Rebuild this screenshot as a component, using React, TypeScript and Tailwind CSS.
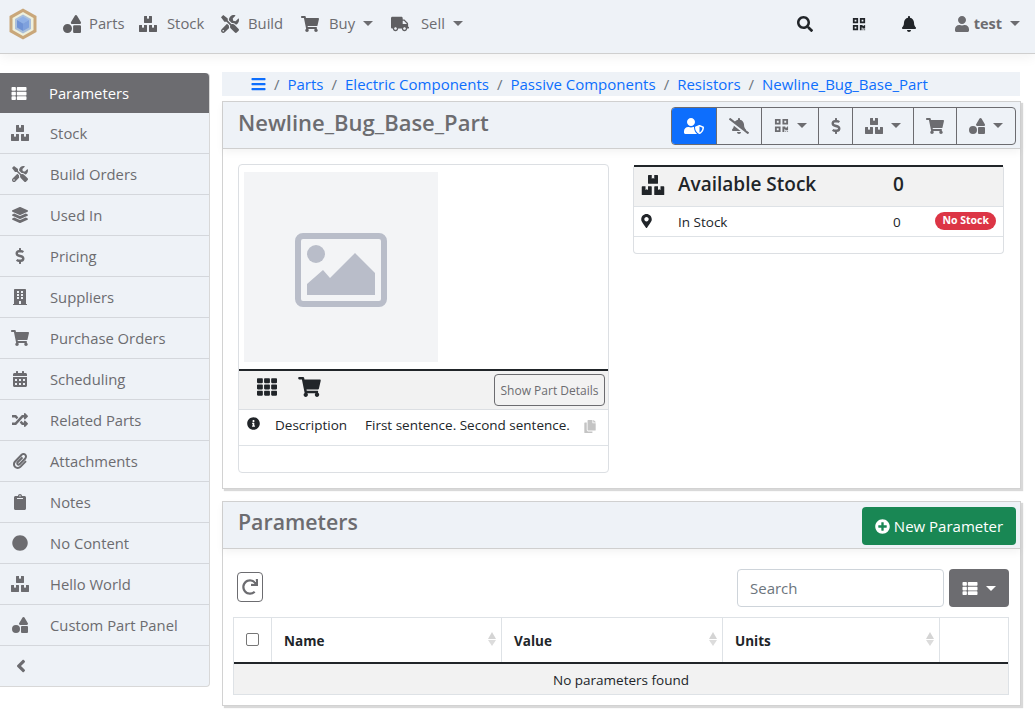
import type { ReactNode } from "react"
import type { IconType } from "react-icons"
import {
  FaAngleLeft,
  FaBars,
  FaBell,
  FaBellSlash,
  FaBoxes,
  FaBuilding,
  FaCalendarAlt,
  FaCircle,
  FaClipboard,
  FaCopy,
  FaDollarSign,
  FaInfoCircle,
  FaLayerGroup,
  FaMapMarkerAlt,
  FaPaperclip,
  FaPlusCircle,
  FaQrcode,
  FaRandom,
  FaRedo,
  FaSearch,
  FaShapes,
  FaShoppingCart,
  FaTh,
  FaThList,
  FaTools,
  FaTruck,
  FaUser,
  FaUserShield,
} from "react-icons/fa"

const sidebarItems: { label: string; icon: IconType }[] = [
  { label: "Stock", icon: FaBoxes },
  { label: "Build Orders", icon: FaTools },
  { label: "Used In", icon: FaLayerGroup },
  { label: "Pricing", icon: FaDollarSign },
  { label: "Suppliers", icon: FaBuilding },
  { label: "Purchase Orders", icon: FaShoppingCart },
  { label: "Scheduling", icon: FaCalendarAlt },
  { label: "Related Parts", icon: FaRandom },
  { label: "Attachments", icon: FaPaperclip },
  { label: "Notes", icon: FaClipboard },
  { label: "No Content", icon: FaCircle },
  { label: "Hello World", icon: FaBoxes },
  { label: "Custom Part Panel", icon: FaShapes },
]

const crumbs = ["Parts", "Electric Components", "Passive Components", "Resistors", "Newline_Bug_Base_Part"]

function Caret({ className = "" }: { className?: string }) {
  return <span className={`h-0 w-0 border-x-[5px] border-t-[5px] border-x-transparent border-t-current ${className}`} />
}

function Logo() {
  return (
    <svg viewBox="0 0 28 32" className="h-[32px] w-[28px]">
      <polygon points="14,0.5 27.5,8 27.5,24 14,31.5 0.5,24 0.5,8" fill="#c9a77a" />
      <polygon points="14,4 24.5,10 24.5,22 14,28 3.5,22 3.5,10" fill="#eef0dd" />
      <polygon points="14,6.5 22,11 22,21 14,25.5 6,21 6,11" fill="#a9bfdc" />
      <polygon points="14,8.5 20,12 14,15.5 8,12" fill="#8fb0e6" />
      <polygon points="8,12 14,15.5 14,23 8,19.5" fill="#6f93d6" />
      <polygon points="20,12 14,15.5 14,23 20,19.5" fill="#7fa1dd" />
    </svg>
  )
}

function NavLink({ icon: Icon, label, caret, className = "", gap = "ml-[9px]" }: { icon: IconType; label: string; caret?: boolean; className?: string; gap?: string }) {
  return (
    <div className={`flex items-center ${className}`}>
      <Icon className="h-[18px] w-[18px] text-[#5f5f62]" />
      <span className={gap}>{label}</span>
      {caret && <Caret className="ml-[8px]" />}
    </div>
  )
}

function ToolButton({ children, caret, className }: { children: ReactNode; caret?: boolean; className: string }) {
  return (
    <div className={`flex h-full items-center justify-center gap-[8px] border-l border-[#6c6c70] text-[#6c6c70] first:border-l-0 ${className}`}>
      {children}
      {caret && <Caret />}
    </div>
  )
}

function SortHead({ label, className }: { label: string; className: string }) {
  return (
    <div className={`flex items-center justify-between border-l border-[#dee2e6] pr-[5px] pl-[12px] ${className}`}>
      <span className="pt-[2px] font-bold">{label}</span>
      <span className="flex flex-col gap-[1px] pb-[2px]">
        <span className="h-0 w-0 border-x-[4px] border-b-[7px] border-x-transparent border-b-[#d4d4d4]" />
        <span className="h-0 w-0 border-x-[4px] border-t-[6px] border-x-transparent border-t-[#dcdcdc]" />
      </span>
    </div>
  )
}

export default function App() {
  return (
    <div className="h-[717px] w-[1035px] overflow-hidden bg-white font-['Open_Sans','Noto_Sans',sans-serif] text-[14px] text-[#212529]">
      {/* Navbar */}
      <header className="flex h-[54px] items-center border-b border-[#cfcfcf] bg-[#eef2f7] pr-[15px] pb-[6px] pl-[9px] shadow-[0_3px_12px_rgba(0,0,0,0.06)]">
        <Logo />
        <nav className="ml-[26px] flex items-center text-[14.8px] text-[#6c6c70]">
          <NavLink icon={FaShapes} label="Parts" gap="ml-[8px]" className="w-[76px]" />
          <NavLink icon={FaBoxes} label="Stock" gap="ml-[10px]" className="w-[82px]" />
          <NavLink icon={FaTools} label="Build" className="w-[80px]" />
          <NavLink icon={FaShoppingCart} label="Buy" gap="ml-[10px]" caret className="w-[90px]" />
          <NavLink icon={FaTruck} label="Sell" gap="ml-[12px]" caret />
        </nav>
        <div className="ml-auto flex items-center text-[#212529]">
          <FaSearch className="h-[16px] w-[16px]" />
          <FaQrcode className="ml-[39px] h-[14px] w-[14px]" />
          <FaBell className="ml-[36px] h-[16px] w-[14px]" />
          <div className="ml-[39px] flex items-center text-[14.5px] font-bold text-[#6c6c70]">
            <FaUser className="h-[16px] w-[14px]" />
            <span className="ml-[5px]">test</span>
            <Caret className="ml-[8px]" />
          </div>
        </div>
      </header>

      <div className="mt-[18px] flex items-start">
        {/* Sidebar */}
        <aside className="mt-px w-[210px] shrink-0 rounded-r-[4px] border-r border-b border-[#d8d8d8] bg-[#eef2f7] text-[14.8px] text-[#6c6c70]">
          <div className="flex h-[40px] items-center rounded-tr-[4px] bg-[#6c6c70] pl-[11px] text-white">
            <FaThList className="h-[15px] w-[16px]" />
            <span className="ml-[22px]">Parameters</span>
          </div>
          {sidebarItems.map(({ label, icon: Icon }) => (
            <div key={label} className="flex h-[41px] items-center border-b border-[#d4d7dc] pl-[11px]">
              <span className="flex w-[18px] justify-center">
                <Icon className="h-[16px] w-[18px]" />
              </span>
              <span className="ml-[21px]">{label}</span>
            </div>
          ))}
          <div className="flex h-[40px] items-center pl-[15px]">
            <FaAngleLeft className="h-[20px] w-[12px]" />
          </div>
        </aside>

        <main className="ml-[12px] w-[799px]">
          {/* Breadcrumb */}
          <div className="flex h-[24px] w-[798px] items-center bg-[#eef2f7] pl-[29px] text-[15px] text-[#0d6efd]">
            <FaBars className="h-[16px] w-[15px]" />
            {crumbs.map((crumb) => (
              <span key={crumb} className="flex items-center">
                <span className="mx-[8px] text-[#6c757d]">/</span>
                {crumb}
              </span>
            ))}
          </div>

          {/* Part panel */}
          <section className="mt-[5px] h-[388px] border border-[#d2d2d2] shadow-[2px_2px_1px_rgba(0,0,0,0.15)]">
            <div className="flex h-[47px] items-center justify-between border-b border-[#cfcfcf] bg-[#eef2f7] pr-[4px] pl-[15px] shadow-[0_3px_8px_rgba(0,0,0,0.05)]">
              <h1 className="-mt-[6px] text-[22px] font-semibold text-[#6c6c70]">Newline_Bug_Base_Part</h1>
              <div className="mt-px flex h-[38px] overflow-hidden rounded-[4px] border border-[#6c6c70]">
                <ToolButton className="w-[44px] bg-[#0d6efd] text-white">
                  <FaUserShield className="h-[16px] w-[20px] text-white" />
                </ToolButton>
                <ToolButton className="w-[45px]">
                  <FaBellSlash className="h-[16px] w-[20px]" />
                </ToolButton>
                <ToolButton caret className="w-[57px]">
                  <FaQrcode className="h-[15px] w-[15px]" />
                </ToolButton>
                <ToolButton className="w-[34px]">
                  <FaDollarSign className="h-[16px] w-[10px]" />
                </ToolButton>
                <ToolButton caret className="w-[61px]">
                  <FaBoxes className="h-[16px] w-[18px]" />
                </ToolButton>
                <ToolButton className="w-[43px]">
                  <FaShoppingCart className="h-[16px] w-[18px]" />
                </ToolButton>
                <ToolButton caret className="w-[59px]">
                  <FaShapes className="h-[16px] w-[16px]" />
                </ToolButton>
              </div>
            </div>

            <div className="flex items-start pt-[15px] pl-[15px]">
              {/* Part image and details */}
              <div className="w-[371px] rounded-[4px] border border-[#dcdfe3]">
                <div className="h-[204px] px-[5px] pt-[7px]">
                  <div className="flex h-[190px] w-[194px] items-center justify-center bg-[#f3f4f6]">
                    <svg viewBox="0 0 92 74" className="mt-[6px] h-[74px] w-[92px]">
                      <rect x="3" y="3" width="86" height="68" rx="5" fill="none" stroke="#b9bdc9" strokeWidth="6" />
                      <circle cx="21" cy="21" r="9" fill="#b9bdc9" />
                      <path d="M12 62V51l16-14 7 8 25-25 20 20v22z" fill="#b9bdc9" />
                    </svg>
                  </div>
                </div>
                <div className="flex h-[41px] items-center justify-between border-t-2 border-b border-t-[#212529] border-b-[#dcdfe3] bg-[#f2f2f2] pr-[3px] pl-[18px]">
                  <div className="-mt-[6px] flex items-center text-[#212529]">
                    <FaTh className="h-[20px] w-[20px]" />
                    <FaShoppingCart className="ml-[21px] h-[20px] w-[23px]" />
                  </div>
                  <div className="flex h-[32px] w-[111px] items-center justify-center rounded-[4px] border border-[#6c6c70] pt-px text-[12px] text-[#6c6c70]">
                    Show Part Details
                  </div>
                </div>
                <div className="flex h-[36px] border-b border-[#dee2e6] pt-[5px] pl-[8px] text-[13.5px]">
                  <FaInfoCircle className="mt-[2px] h-[13px] w-[13px]" />
                  <span className="ml-[15px] w-[90px]">Description</span>
                  <span>First sentence. Second sentence.</span>
                  <FaCopy className="mt-[5px] ml-[14px] h-[13px] w-[12px] text-[#c4c4c4]" />
                </div>
                <div className="h-[26px]" />
              </div>

              {/* Stock summary */}
              <div className="mt-px ml-[24px] w-[371px] rounded-[4px] border border-t-0 border-[#dcdfe3]">
                <div className="flex h-[42px] items-center border-t-2 border-b border-t-[#212529] border-b-[#dee2e6] bg-[#f2f2f2] pb-[4px] pl-[7px] text-[19px] font-semibold">
                  <FaBoxes className="h-[20px] w-[24px]" />
                  <span className="ml-[13px] w-[215px]">Available Stock</span>
                  <span>0</span>
                </div>
                <div className="flex h-[30px] items-center border-b border-[#dee2e6] pt-[2px] pl-[7px] text-[13.5px]">
                  <FaMapMarkerAlt className="-mt-[3px] h-[14px] w-[11px]" />
                  <span className="ml-[26px] w-[215px]">In Stock</span>
                  <span>0</span>
                  <span className="-mt-[4px] mr-[7px] ml-auto flex h-[18px] items-center rounded-full bg-[#dc3545] px-[7px] text-[10.5px] font-bold text-white">No Stock</span>
                </div>
                <div className="h-[16px]" />
              </div>
            </div>
          </section>

          {/* Parameters panel */}
          <section className="mt-[12px] h-[205px] border border-[#d2d2d2] shadow-[2px_2px_1px_rgba(0,0,0,0.15)]">
            <div className="flex h-[47px] items-center justify-between border-b border-[#cfcfcf] bg-[#eef2f7] pr-[4px] pl-[15px] shadow-[0_3px_8px_rgba(0,0,0,0.05)]">
              <h2 className="-mt-[6px] text-[21.3px] font-semibold text-[#6c6c70]">Parameters</h2>
              <div className="mt-px flex h-[38px] w-[154px] items-center justify-center rounded-[4px] bg-[#198754] pt-px text-[15px] text-white">
                <FaPlusCircle className="mr-[4px] h-[15px] w-[15px]" />
                New Parameter
              </div>
            </div>
            <div className="px-[10px]">
              <div className="flex items-center justify-between pt-[20px] pr-[1px] pl-[4px]">
                <div className="-mt-[2px] flex h-[30px] w-[26px] items-center justify-center rounded-[4px] border border-[#6c6c70] text-[#6c6c70]">
                  <FaRedo className="h-[16px] w-[16px]" />
                </div>
                <div className="flex items-center">
                  <div className="flex h-[38px] w-[207px] items-center rounded-[4px] border border-[#ced4da] pl-[12px] text-[15px] text-[#6c757d]">Search</div>
                  <div className="ml-[5px] flex h-[38px] w-[60px] items-center justify-center gap-[8px] rounded-[4px] bg-[#6c6c70] text-white">
                    <FaThList className="h-[15px] w-[16px]" />
                    <Caret />
                  </div>
                </div>
              </div>
              <div className="mt-[10px] w-[776px] border border-[#dee2e6] text-[13.5px]">
                <div className="flex h-[46px] border-b-2 border-b-[#212529]">
                  <div className="flex w-[37px] items-center justify-center pb-[2px]">
                    <span className="h-[13px] w-[13px] rounded-[2px] border border-[#767676] bg-white" />
                  </div>
                  <SortHead label="Name" className="w-[230px]" />
                  <SortHead label="Value" className="w-[221px]" />
                  <SortHead label="Units" className="w-[217px]" />
                  <div className="flex-1 border-l border-[#dee2e6]" />
                </div>
                <div className="flex h-[30px] items-center justify-center bg-[#f2f2f2] pt-[2px]">No parameters found</div>
              </div>
            </div>
          </section>
        </main>
      </div>
    </div>
  )
}
